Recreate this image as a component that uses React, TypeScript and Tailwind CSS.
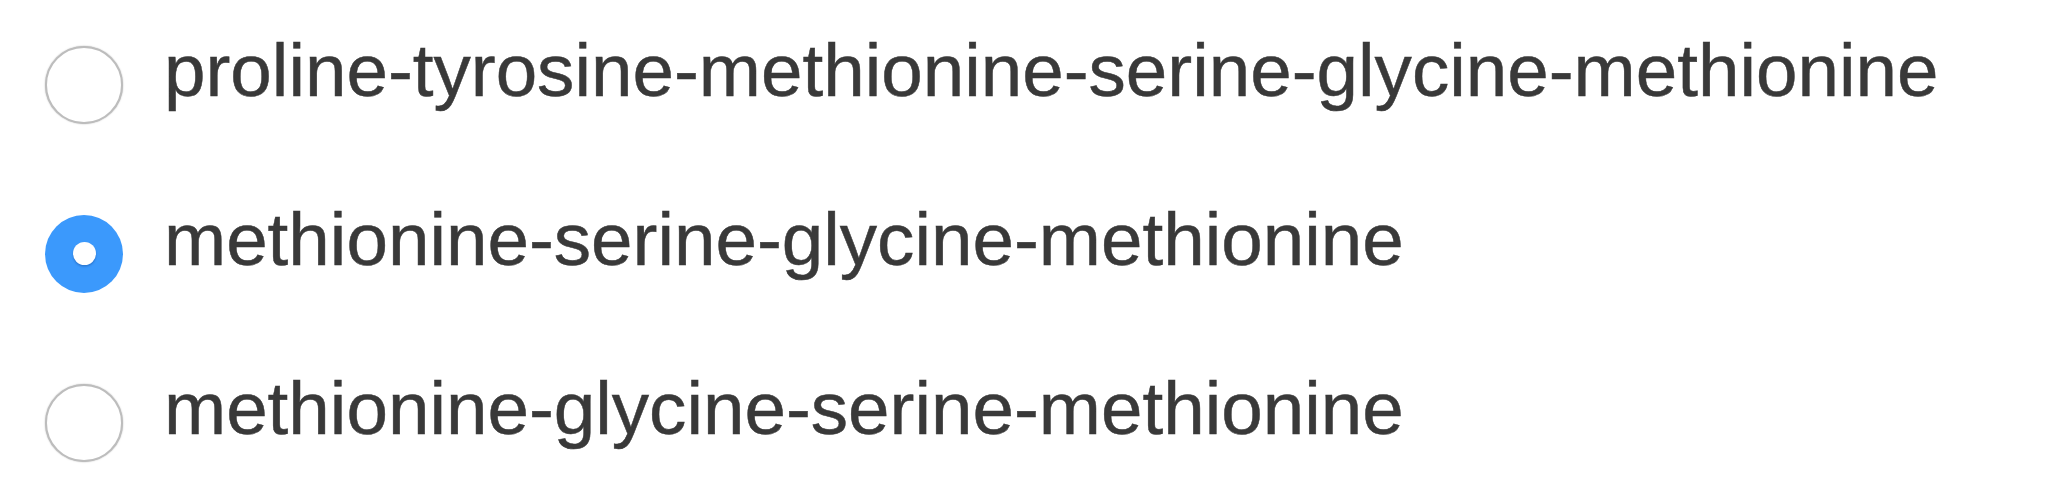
import { useState } from 'react';

const OPTIONS = [
  'proline-tyrosine-methionine-serine-glycine-methionine',
  'methionine-serine-glycine-methionine',
  'methionine-glycine-serine-methionine',
];

function RadioDot({ checked }: { checked: boolean }) {
  if (checked) {
    return (
      <span className="flex h-[78px] w-[78px] shrink-0 items-center justify-center rounded-full bg-[#3b99fc]">
        <span className="h-[23px] w-[23px] rounded-full bg-white shadow-[0_1.5px_2px_rgba(0,40,110,0.3)]" />
      </span>
    );
  }
  return (
    <span className="h-[78px] w-[78px] shrink-0 rounded-full border-2 border-[#bdbdbd] bg-white shadow-[0_0_1.5px_rgba(0,0,0,0.35)]" />
  );
}

export default function App() {
  const [selected, setSelected] = useState(1);

  return (
    <div className="min-h-screen bg-white font-['Liberation_Sans',Helvetica,Arial,sans-serif] text-[#393939]">
      <div className="flex flex-col">
        {OPTIONS.map((label, i) => (
          <label
            key={label}
            className="flex h-[169px] cursor-pointer items-center pl-[45px]"
            onClick={() => setSelected(i)}
          >
            <RadioDot checked={selected === i} />
            <span className="mb-[28px] ml-[41px] whitespace-nowrap text-[74.6px] leading-none [-webkit-text-stroke:0.5px_#393939]">
              {label}
            </span>
          </label>
        ))}
      </div>
    </div>
  );
}
